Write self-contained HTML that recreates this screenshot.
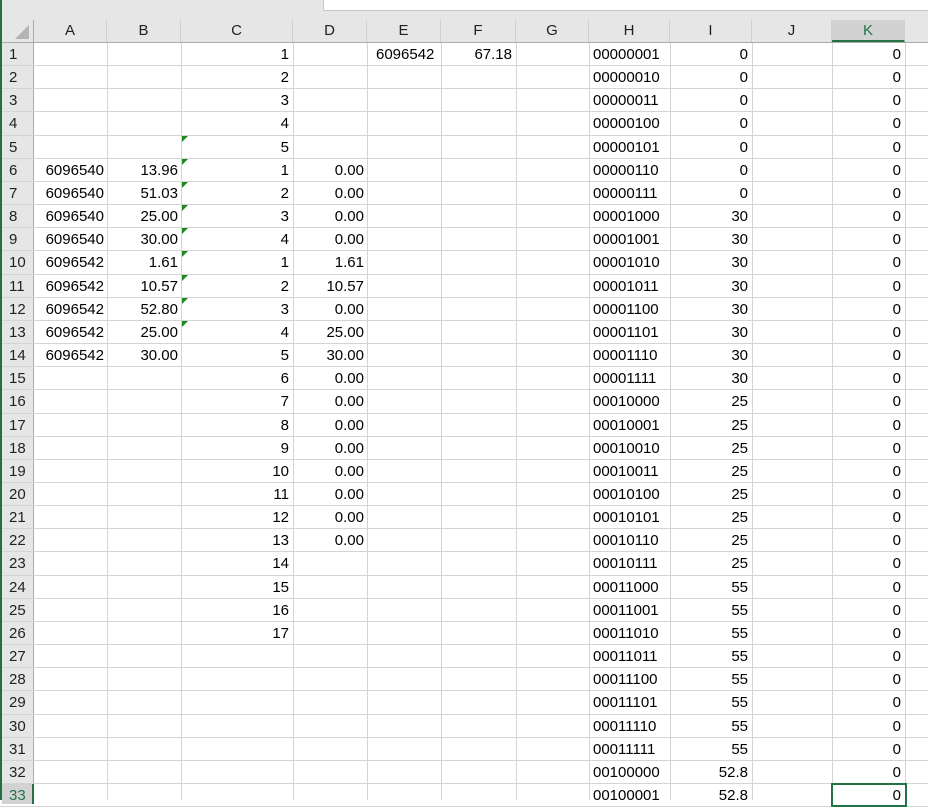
<!DOCTYPE html>
<html><head><meta charset="utf-8"><style>
*{margin:0;padding:0;box-sizing:border-box}
body{width:928px;height:800px;overflow:hidden;background:#fff;font-family:"Liberation Sans",sans-serif;font-size:15px;color:#000;position:relative}
#top{position:absolute;left:0;top:0;width:928px;height:20px;background:#e6e6e6}
#box{position:absolute;left:323px;top:0;width:605px;height:11px;background:#fff;border-left:1px solid #c6c6c6;border-bottom:1px solid #c6c6c6}
#gl{position:absolute;left:0;top:0;width:2px;height:800px;background:#217346;z-index:5}
#hdr{position:absolute;left:0;top:20px;width:928px;height:23px;background:#e6e6e6;border-bottom:1px solid #ababab}
#hdr span{position:absolute;top:0;height:22px;line-height:22px;text-align:center;color:#222;border-right:1px solid #d0d0d0}
#rh{position:absolute;left:0;top:43px;width:34px;height:757px;background:#e6e6e6;border-right:1px solid #ababab}
.v{position:absolute;top:43px;width:1px;height:757px;background:#d4d4d4}
#rows{position:absolute;left:0;top:43px;width:928px}
.r{position:relative;height:23.16px;border-bottom:1px solid #d4d4d4;line-height:23px}
.r span{position:absolute;top:0;height:22px;white-space:nowrap}
.r b{font-weight:normal;position:absolute;left:0;width:34px;padding-left:9px;color:#222}
.a{left:34px;width:73px;text-align:right;padding-right:3px}
.b{left:107px;width:74px;text-align:right;padding-right:3px}
.c{left:181px;width:112px;text-align:right;padding-right:4px}
.d{left:293px;width:74px;text-align:right;padding-right:3px}
.e{left:367px;width:74px;padding-left:9px}
.f{left:441px;width:75px;text-align:right;padding-right:4px}
.h{left:589px;width:81px;padding-left:4px}
.i{left:670px;width:82px;text-align:right;padding-right:4px}
.k{left:832px;width:73px;text-align:right;padding-right:4px}
.t:before{content:"";position:absolute;left:1px;top:0;border-top:6px solid #1e8a1e;border-right:6px solid transparent}
#sel{position:absolute;left:831px;top:783px;width:76px;height:24px;border:2px solid #217346}
#rsel{position:absolute;left:2px;top:784px;width:32px;height:20px;background:#d2d2d2;border-right:2px solid #217346}
</style></head><body>
<div id="top"><div id="box"></div></div>
<div id="gl"></div>
<div id="hdr">
<span style="left:0;width:34px;border-right:1px solid #ababab"><i style="position:absolute;right:4px;bottom:3px;border-left:14px solid transparent;border-bottom:14px solid #b4b4b4"></i></span>
<span style="left:34px;width:73px">A</span><span style="left:107px;width:74px">B</span><span style="left:181px;width:112px">C</span><span style="left:293px;width:74px">D</span><span style="left:367px;width:74px">E</span><span style="left:441px;width:75px">F</span><span style="left:516px;width:73px">G</span><span style="left:589px;width:81px">H</span><span style="left:670px;width:82px">I</span><span style="left:752px;width:80px">J</span><span style="left:832px;width:73px;background:#d2d2d2;color:#217346;border-bottom:2px solid #217346">K</span>
</div>
<div id="rh"></div>
<div id="rsel"></div>
<div class="v" style="left:107px"></div><div class="v" style="left:181px"></div><div class="v" style="left:293px"></div><div class="v" style="left:367px"></div><div class="v" style="left:441px"></div><div class="v" style="left:516px"></div><div class="v" style="left:589px"></div><div class="v" style="left:670px"></div><div class="v" style="left:752px"></div><div class="v" style="left:832px"></div><div class="v" style="left:905px"></div>
<div id="rows">
<div class="r"><b>1</b><span class="c">1</span><span class="e">6096542</span><span class="f">67.18</span><span class="h">00000001</span><span class="i">0</span><span class="k">0</span></div>
<div class="r"><b>2</b><span class="c">2</span><span class="h">00000010</span><span class="i">0</span><span class="k">0</span></div>
<div class="r"><b>3</b><span class="c">3</span><span class="h">00000011</span><span class="i">0</span><span class="k">0</span></div>
<div class="r"><b>4</b><span class="c">4</span><span class="h">00000100</span><span class="i">0</span><span class="k">0</span></div>
<div class="r"><b>5</b><span class="c t">5</span><span class="h">00000101</span><span class="i">0</span><span class="k">0</span></div>
<div class="r"><b>6</b><span class="a">6096540</span><span class="b">13.96</span><span class="c t">1</span><span class="d">0.00</span><span class="h">00000110</span><span class="i">0</span><span class="k">0</span></div>
<div class="r"><b>7</b><span class="a">6096540</span><span class="b">51.03</span><span class="c t">2</span><span class="d">0.00</span><span class="h">00000111</span><span class="i">0</span><span class="k">0</span></div>
<div class="r"><b>8</b><span class="a">6096540</span><span class="b">25.00</span><span class="c t">3</span><span class="d">0.00</span><span class="h">00001000</span><span class="i">30</span><span class="k">0</span></div>
<div class="r"><b>9</b><span class="a">6096540</span><span class="b">30.00</span><span class="c t">4</span><span class="d">0.00</span><span class="h">00001001</span><span class="i">30</span><span class="k">0</span></div>
<div class="r"><b>10</b><span class="a">6096542</span><span class="b">1.61</span><span class="c t">1</span><span class="d">1.61</span><span class="h">00001010</span><span class="i">30</span><span class="k">0</span></div>
<div class="r"><b>11</b><span class="a">6096542</span><span class="b">10.57</span><span class="c t">2</span><span class="d">10.57</span><span class="h">00001011</span><span class="i">30</span><span class="k">0</span></div>
<div class="r"><b>12</b><span class="a">6096542</span><span class="b">52.80</span><span class="c t">3</span><span class="d">0.00</span><span class="h">00001100</span><span class="i">30</span><span class="k">0</span></div>
<div class="r"><b>13</b><span class="a">6096542</span><span class="b">25.00</span><span class="c t">4</span><span class="d">25.00</span><span class="h">00001101</span><span class="i">30</span><span class="k">0</span></div>
<div class="r"><b>14</b><span class="a">6096542</span><span class="b">30.00</span><span class="c">5</span><span class="d">30.00</span><span class="h">00001110</span><span class="i">30</span><span class="k">0</span></div>
<div class="r"><b>15</b><span class="c">6</span><span class="d">0.00</span><span class="h">00001111</span><span class="i">30</span><span class="k">0</span></div>
<div class="r"><b>16</b><span class="c">7</span><span class="d">0.00</span><span class="h">00010000</span><span class="i">25</span><span class="k">0</span></div>
<div class="r"><b>17</b><span class="c">8</span><span class="d">0.00</span><span class="h">00010001</span><span class="i">25</span><span class="k">0</span></div>
<div class="r"><b>18</b><span class="c">9</span><span class="d">0.00</span><span class="h">00010010</span><span class="i">25</span><span class="k">0</span></div>
<div class="r"><b>19</b><span class="c">10</span><span class="d">0.00</span><span class="h">00010011</span><span class="i">25</span><span class="k">0</span></div>
<div class="r"><b>20</b><span class="c">11</span><span class="d">0.00</span><span class="h">00010100</span><span class="i">25</span><span class="k">0</span></div>
<div class="r"><b>21</b><span class="c">12</span><span class="d">0.00</span><span class="h">00010101</span><span class="i">25</span><span class="k">0</span></div>
<div class="r"><b>22</b><span class="c">13</span><span class="d">0.00</span><span class="h">00010110</span><span class="i">25</span><span class="k">0</span></div>
<div class="r"><b>23</b><span class="c">14</span><span class="h">00010111</span><span class="i">25</span><span class="k">0</span></div>
<div class="r"><b>24</b><span class="c">15</span><span class="h">00011000</span><span class="i">55</span><span class="k">0</span></div>
<div class="r"><b>25</b><span class="c">16</span><span class="h">00011001</span><span class="i">55</span><span class="k">0</span></div>
<div class="r"><b>26</b><span class="c">17</span><span class="h">00011010</span><span class="i">55</span><span class="k">0</span></div>
<div class="r"><b>27</b><span class="h">00011011</span><span class="i">55</span><span class="k">0</span></div>
<div class="r"><b>28</b><span class="h">00011100</span><span class="i">55</span><span class="k">0</span></div>
<div class="r"><b>29</b><span class="h">00011101</span><span class="i">55</span><span class="k">0</span></div>
<div class="r"><b>30</b><span class="h">00011110</span><span class="i">55</span><span class="k">0</span></div>
<div class="r"><b>31</b><span class="h">00011111</span><span class="i">55</span><span class="k">0</span></div>
<div class="r"><b>32</b><span class="h">00100000</span><span class="i">52.8</span><span class="k">0</span></div>
<div class="r"><b style="color:#217346">33</b><span class="h">00100001</span><span class="i">52.8</span><span class="k">0</span></div>
</div>
<div id="sel"></div>
</body></html>
